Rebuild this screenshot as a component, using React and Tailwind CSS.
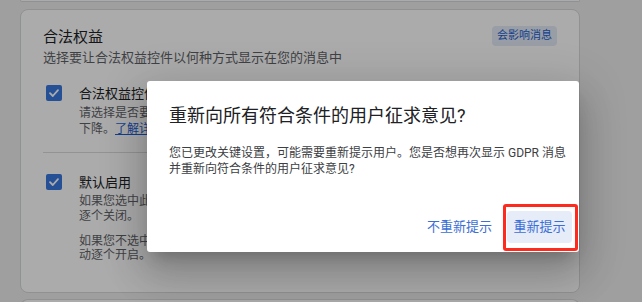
import React from "react";

function Check() {
  return (
    <div className="mt-0 ml-[3px] flex h-[16px] w-[16px] shrink-0 items-center justify-center rounded-[2px] bg-[#3a78e0]">
      <svg width="12" height="12" viewBox="0 0 12 12" fill="none">
        <path d="M2 6.2 L4.8 9 L10 3.2" stroke="#ffffff" strokeWidth="1.8" strokeLinecap="round" strokeLinejoin="round" />
      </svg>
    </div>
  );
}

export default function App() {
  return (
    <div className="relative h-[302px] w-[642px] overflow-hidden bg-[#eeeeee] font-['Roboto','Noto_Sans_CJK_SC',sans-serif]">
      <div className="flex flex-col px-[20px]">
        <div className="h-[2px] w-[560px] rounded-b-[8px] border border-t-0 border-[#d6d8dc] bg-white" />
        <div className="mt-[7px] flex h-[284px] w-[560px] flex-col rounded-[8px] border border-[#d6d8dc] bg-white px-[22px] pt-[16px]">
          <div className="flex items-start justify-between">
            <div className="mt-[1px] text-[15px] leading-[20px] text-[#202124]">合法权益</div>
            <div className="rounded-[4px] bg-[#e4ebf8] px-[5px] text-[11px] leading-[20px] text-[#1b5fd0]">会影响消息</div>
          </div>
          <div className="mt-[2px] text-[13px] leading-[18px] text-[#5f6368]">选择要让合法权益控件以何种方式显示在您的消息中</div>

          <div className="mt-[18px] flex items-start gap-[17px]">
            <Check />
            <div className="flex flex-col">
              <div className="text-[13px] leading-[18px] text-[#202124]">合法权益控件</div>
              <div className="mt-[2px] whitespace-nowrap text-[12px] leading-[16px] text-[#5f6368]">
                请选择是否要在消息中显示合法权益控件。如果不显示，同意率可能会有所
                <br />
                下降。<span className="text-[#1a5fd6] underline">了解详情</span>
              </div>
            </div>
          </div>

          <div className="mt-[15px] h-px w-full bg-[#dadce0]" />

          <div className="mt-[21px] flex items-start gap-[17px]">
            <Check />
            <div className="flex flex-col">
              <div className="text-[13px] leading-[18px] text-[#202124]">默认启用</div>
              <div className="mt-[2px] whitespace-nowrap text-[12px] leading-[15px] text-[#5f6368]">
                如果您选中此选项，系统会默认启用所有用途的合法权益，用户需要手动
                <br />
                逐个关闭。
              </div>
              <div className="mt-[10px] whitespace-nowrap text-[12px] leading-[14px] text-[#5f6368]">
                如果您不选中此选项，系统会默认停用所有用途的合法权益，用户需要手
                <br />
                动逐个开启。
              </div>
            </div>
          </div>
        </div>
        <div className="mt-[6px] h-[20px] w-[560px] rounded-t-[8px] border border-b-0 border-[#d6d8dc] bg-white" />
      </div>

      <div className="absolute inset-0 bg-black/[0.33]" />

      <div className="absolute left-[147px] top-[81px] flex h-[171px] w-[432px] flex-col rounded-[3px] bg-white px-[22px] pt-[23px] shadow-[0_11px_15px_-7px_rgba(0,0,0,0.2),0_24px_38px_3px_rgba(0,0,0,0.14),0_9px_46px_8px_rgba(0,0,0,0.12)]">
        <div className="whitespace-nowrap text-[18px] leading-[24px] text-[#202124]">重新向所有符合条件的用户征求意见?</div>
        <div className="mt-[17px] whitespace-nowrap text-[12px] leading-[16px] text-[#3c4043]">
          您已更改关键设置，可能需要重新提示用户。您是否想再次显示 GDPR 消息
          <br />
          并重新向符合条件的用户征求意见?
        </div>
        <div className="absolute bottom-[9px] right-[7px] flex items-center gap-[8px]">
          <button className="h-[32px] rounded-[4px] px-[7px] text-[13px] text-[#3b6fd6]">不重新提示</button>
          <div className="relative">
            <button className="h-[32px] w-[65px] rounded-[4px] bg-[#e7ecf9] text-[13px] text-[#3b6fd6]">重新提示</button>
            <div className="absolute left-[-4px] top-[-7px] h-[47px] w-[75px] rounded-[3px] border-[3px] border-[#ff2a1e]" />
          </div>
        </div>
      </div>
    </div>
  );
}
